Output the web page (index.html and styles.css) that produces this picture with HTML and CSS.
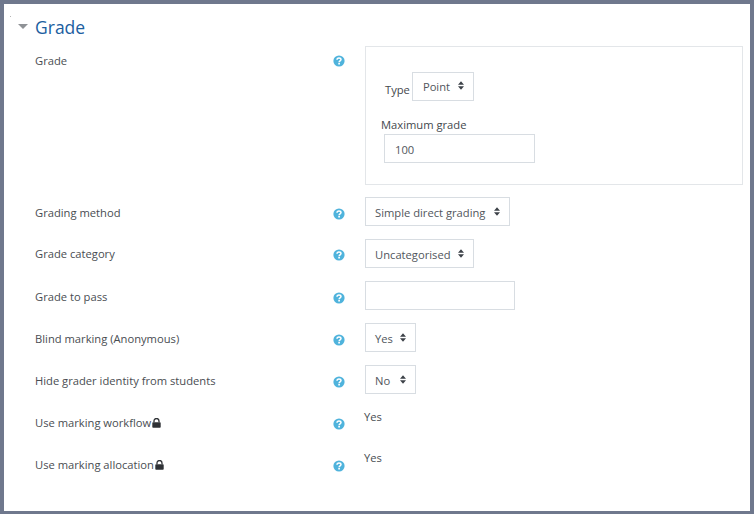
FILE: index.html
```html
<!DOCTYPE html>
<html lang="en">
<head>
<meta charset="utf-8">
<title>Grade</title>
<link rel="stylesheet" href="styles.css">
</head>
<body>
<svg class="sprites" width="0" height="0" aria-hidden="true">
  <symbol id="help" viewBox="0 0 12 12">
    <circle cx="6" cy="6" r="5.6" fill="#4fb3dc"/>
    <path d="M4 4.7C4 3.5 4.9 2.9 6 2.9S8 3.5 8 4.6C8 5.9 6.1 5.9 6.1 7.2" fill="none" stroke="#fff" stroke-width="1.5"/>
    <rect x="5.25" y="7.9" width="1.7" height="1.6" fill="#fff"/>
  </symbol>
  <symbol id="updown" viewBox="0 0 7 10">
    <path d="M3.5 0 7 4H0zM0 6h7l-3.5 4z" fill="#3d4248"/>
  </symbol>
  <symbol id="lock" viewBox="0 0 9 10">
    <path d="M2 4.2V3a2.5 2.5 0 0 1 5 0v1.2" fill="none" stroke="#2f3236" stroke-width="1.3"/>
    <rect x=".3" y="4.2" width="8.4" height="5.6" rx=".8" fill="#2f3236"/>
  </symbol>
</svg>
<main class="frame">
  <span class="speck"></span>
  <header class="section-head">
    <span class="caret"></span>
    <h2 class="section-title">Grade</h2>
  </header>
  <div class="form-grid">
    <div class="label label-first">Grade</div>
    <svg class="help help-first"><use href="#help"/></svg>
    <div class="group-box">
      <div class="type-row">
        <span class="type-label">Type</span>
        <div class="select select-type"><span>Point</span><svg class="updown"><use href="#updown"/></svg></div>
      </div>
      <div class="max-label">Maximum grade</div>
      <div class="input input-max">100</div>
    </div>

    <div class="label">Grading method</div>
    <svg class="help"><use href="#help"/></svg>
    <div class="select select-method"><span>Simple direct grading</span><svg class="updown"><use href="#updown"/></svg></div>

    <div class="label label-up">Grade category</div>
    <svg class="help help-up"><use href="#help"/></svg>
    <div class="select select-category"><span>Uncategorised</span><svg class="updown"><use href="#updown"/></svg></div>

    <div class="label">Grade to pass</div>
    <svg class="help"><use href="#help"/></svg>
    <div class="input input-pass"></div>

    <div class="label">Blind marking (Anonymous)</div>
    <svg class="help"><use href="#help"/></svg>
    <div class="select select-short"><span>Yes</span><svg class="updown"><use href="#updown"/></svg></div>

    <div class="label">Hide grader identity from students</div>
    <svg class="help"><use href="#help"/></svg>
    <div class="select select-short"><span>No</span><svg class="updown"><use href="#updown"/></svg></div>

    <div class="label">Use marking workflow<svg class="lock"><use href="#lock"/></svg></div>
    <svg class="help"><use href="#help"/></svg>
    <div class="static">Yes</div>

    <div class="label">Use marking allocation<svg class="lock"><use href="#lock"/></svg></div>
    <svg class="help"><use href="#help"/></svg>
    <div class="static static-last">Yes</div>
  </div>
</main>
</body>
</html>
```
FILE: styles.css
```css
* { box-sizing: border-box; }
html, body { margin: 0; padding: 0; }
body {
  font-family: "Open Sans", "Noto Sans", sans-serif;
  font-size: 11.2px;
  line-height: 18px;
  color: #44484d;
  background: #fff;
}
.sprites { position: absolute; }
.frame {
  position: relative;
  width: 754px;
  height: 514px;
  border: solid #6f788d;
  border-width: 4px 4px 3px 4px;
  background: #fff;
  overflow: hidden;
}
.speck {
  position: absolute;
  left: 6px;
  top: 12px;
  width: 1px;
  height: 1px;
  background: #b5b5b5;
}
.section-head {
  display: flex;
  align-items: center;
  height: 42px;
  padding: 4px 0 0 14px;
}
.caret {
  width: 0;
  height: 0;
  margin-top: -2px;
  margin-right: 7px;
  border-style: solid;
  border-width: 5px 5px 0 5px;
  border-color: #8f9296 transparent transparent;
}
.section-title {
  margin: 0;
  font-size: 17.5px;
  font-weight: 400;
  line-height: 24px;
  color: #1b5e9f;
}
.form-grid {
  display: grid;
  grid-template-columns: 298px 32px 378px;
  grid-auto-rows: minmax(29px, auto);
  row-gap: 13px;
  align-items: start;
  padding-left: 31px;
}
.label {
  margin-top: 7px;
  color: #494d52;
  white-space: nowrap;
}
.label-first { margin-top: 6px; }
.label-up { margin-top: 6px; }
.help {
  width: 12px;
  height: 12px;
  margin-top: 11px;
}
.help-first { margin-top: 9px; }
.help-up { margin-top: 10px; }
.lock {
  width: 9px;
  height: 10px;
  margin-left: 1px;
  vertical-align: -0.5px;
}
.group-box {
  height: 139px;
  margin-bottom: -1px;
  padding: 25px 0 0 15px;
  border: 1px solid #e3e6e9;
}
.type-row {
  display: flex;
  align-items: flex-start;
  margin-left: 4px;
  gap: 2px;
}
.type-label { margin-top: 9px; }
.max-label { margin-top: 15px; }
.select {
  display: inline-flex;
  justify-self: start;
  justify-content: space-between;
  align-items: center;
  height: 29px;
  padding: 2px 9px 0;
  border: 1px solid #d8dde2;
  color: #51565c;
  background: #fff;
  white-space: nowrap;
}
.select-type { width: 62px; padding: 0 9px 0 10px; }
.select-method { width: 145px; }
.select-category { width: 109px; }
.select-short { width: 51px; }
.updown { width: 6px; height: 9px; margin-top: -2px; }
.input {
  height: 29px;
  padding: 6px 10px;
  border: 1px solid #d8dde2;
  color: #51565c;
  background: #fff;
}
.input-max { width: 151px; margin-left: 3px; }
.input-pass { width: 150px; }
.static { margin: 1px 0 0 -1px; color: #494d52; }
.static-last { margin-top: 0; }
```
